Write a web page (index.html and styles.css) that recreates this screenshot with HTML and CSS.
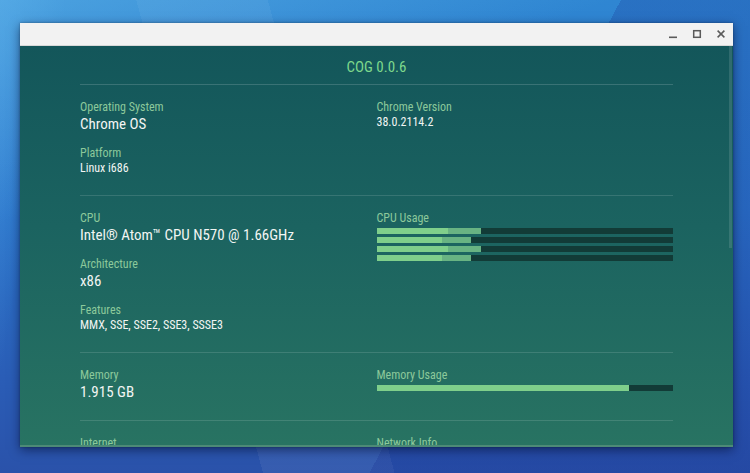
FILE: index.html
```html
<!DOCTYPE html>
<html lang="en">
<head>
<meta charset="utf-8">
<title>COG</title>
<link rel="stylesheet" href="styles.css">
</head>
<body>
<div class="desktop">
  <div class="window">
    <div class="titlebar">
      <span class="ctl"><svg width="10" height="10" viewBox="0 0 10 10"><rect x="1" y="7.5" width="8" height="1.6" fill="#5a5a5a"/></svg></span>
      <span class="ctl"><svg width="10" height="10" viewBox="0 0 10 10"><rect x="1.7" y="1.7" width="6.6" height="6.6" fill="none" stroke="#5a5a5a" stroke-width="1.5"/></svg></span>
      <span class="ctl"><svg width="10" height="10" viewBox="0 0 10 10"><path d="M1.6 1.6 L8.4 8.4 M8.4 1.6 L1.6 8.4" stroke="#5a5a5a" stroke-width="1.5"/></svg></span>
    </div>
    <div class="content">
      <div class="scroll-thumb"></div>
      <div class="inner">
        <h1 class="app-title">COG 0.0.6</h1>

        <section class="section">
          <div class="col">
            <div class="field"><div class="label">Operating System</div><div class="value big">Chrome OS</div></div>
            <div class="field"><div class="label">Platform</div><div class="value">Linux i686</div></div>
          </div>
          <div class="col">
            <div class="field"><div class="label">Chrome Version</div><div class="value">38.0.2114.2</div></div>
          </div>
        </section>

        <section class="section">
          <div class="col">
            <div class="field"><div class="label">CPU</div><div class="value big">Intel® Atom™ CPU N570 @ 1.66GHz</div></div>
            <div class="field"><div class="label">Architecture</div><div class="value big">x86</div></div>
            <div class="field"><div class="label">Features</div><div class="value">MMX, SSE, SSE2, SSE3, SSSE3</div></div>
          </div>
          <div class="col">
            <div class="field">
              <div class="label">CPU Usage</div>
              <div class="bars">
                <div class="bar"><span class="fill user" style="width:24.2%"></span><span class="fill sys" style="width:10.9%"></span></div>
                <div class="bar"><span class="fill user" style="width:22.2%"></span><span class="fill sys" style="width:9.8%"></span></div>
                <div class="bar"><span class="fill user" style="width:24.2%"></span><span class="fill sys" style="width:10.9%"></span></div>
                <div class="bar"><span class="fill user" style="width:22.2%"></span><span class="fill sys" style="width:9.8%"></span></div>
              </div>
            </div>
          </div>
        </section>

        <section class="section">
          <div class="col">
            <div class="field"><div class="label">Memory</div><div class="value big">1.915 GB</div></div>
          </div>
          <div class="col">
            <div class="field">
              <div class="label">Memory Usage</div>
              <div class="bars">
                <div class="bar"><span class="fill user" style="width:85.2%"></span></div>
              </div>
            </div>
          </div>
        </section>

        <section class="section last">
          <div class="col">
            <div class="field"><div class="label">Internet</div></div>
          </div>
          <div class="col">
            <div class="field"><div class="label">Network Info</div></div>
          </div>
        </section>
      </div>
    </div>
  </div>
</div>
</body>
</html>
```

FILE: styles.css
```css
html, body {
  margin: 0;
  padding: 0;
}

body {
  width: 750px;
  height: 473px;
  overflow: hidden;
  font-family: Roboto, "Liberation Sans", sans-serif;
  font-stretch: 85%;
}

.desktop {
  box-sizing: border-box;
  width: 750px;
  height: 473px;
  padding: 23px 17px 0 20px;
  background:
    linear-gradient(160deg, rgba(110, 195, 240, 0.45) 0%, rgba(110, 195, 240, 0) 30%),
    linear-gradient(100deg, rgba(90, 170, 235, 0.35) 0%, rgba(90, 170, 235, 0) 8%),
    linear-gradient(118deg, transparent 0 62%, rgba(20, 40, 140, 0.22) 62% 100%),
    linear-gradient(75deg, transparent 0 30%, rgba(255, 255, 255, 0.06) 30% 45%, transparent 45%),
    linear-gradient(180deg, #2f86d2 0%, #2c76cb 45%, #2a5db6 80%, #2a52aa 100%);
}

.window {
  width: 713px;
  height: 424px;
  display: flex;
  flex-direction: column;
  box-shadow: 0 3px 10px rgba(0, 10, 40, 0.55), 0 0 2px rgba(0, 0, 0, 0.3);
}

.titlebar {
  flex: 0 0 23px;
  display: flex;
  justify-content: flex-end;
  align-items: center;
  gap: 14px;
  padding-right: 7px;
  background: #f2f2f2;
  border-bottom: 1px solid #d8d8d8;
  box-sizing: border-box;
}

.ctl {
  display: flex;
  width: 10px;
  height: 10px;
}

.content {
  position: relative;
  flex: 1;
  overflow: hidden;
  background: linear-gradient(180deg, #13565a 0%, #1b6360 45%, #287362 100%);
  border-bottom: 2px solid #4d8a76;
}

.scroll-thumb {
  position: absolute;
  top: 0;
  right: 1px;
  width: 3px;
  height: 202px;
  background: rgba(255, 255, 255, 0.12);
}

.inner {
  padding: 0 60px;
}

.app-title {
  margin: 0;
  padding: 12px 0 8px;
  font-size: 15px;
  line-height: 18px;
  font-weight: 400;
  color: #7ed98c;
  text-align: center;
  border-bottom: 1px solid rgba(255, 255, 255, 0.16);
}

.section {
  display: grid;
  grid-template-columns: 1fr 1fr;
  padding: 15px 0 6px;
  border-bottom: 1px solid rgba(255, 255, 255, 0.13);
}

.field {
  margin-bottom: 13px;
}

.label {
  font-size: 12px;
  line-height: 15px;
  color: #8cc99b;
}

.value {
  font-size: 12px;
  line-height: 15px;
  color: #f2f5f3;
}

.value.big {
  font-size: 15px;
  line-height: 18px;
}

.bars {
  display: flex;
  flex-direction: column;
  gap: 3px;
  margin-top: 2px;
}

.bar {
  display: flex;
  height: 6px;
  background: #123b37;
}

.fill {
  display: block;
  height: 100%;
}

.fill.user {
  background: #7fcf8b;
}

.fill.sys {
  background: #68b383;
}
```
